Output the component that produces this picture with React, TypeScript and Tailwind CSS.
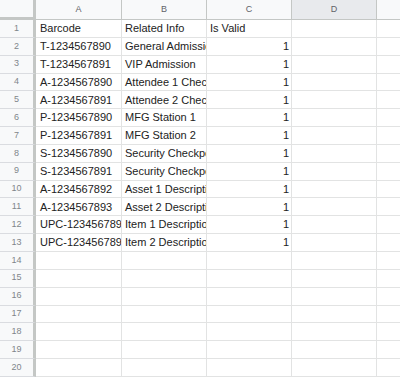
const columns = ["A", "B", "C", "D", "E"];

type Row = [string, string, string];

const data: Row[] = [
  ["Barcode", "Related Info", "Is Valid"],
  ["T-1234567890", "General Admission", "1"],
  ["T-1234567891", "VIP Admission", "1"],
  ["A-1234567890", "Attendee 1 Check-in", "1"],
  ["A-1234567891", "Attendee 2 Check-in", "1"],
  ["P-1234567890", "MFG Station 1", "1"],
  ["P-1234567891", "MFG Station 2", "1"],
  ["S-1234567890", "Security Checkpoint 1", "1"],
  ["S-1234567891", "Security Checkpoint 2", "1"],
  ["A-1234567892", "Asset 1 Description", "1"],
  ["A-1234567893", "Asset 2 Description", "1"],
  ["UPC-123456789012", "Item 1 Description", "1"],
  ["UPC-123456789013", "Item 2 Description", "1"],
];

const ROW_COUNT = 20;
const gridCols = "grid grid-cols-[36px_86px_85px_85px_85px_85px] w-[462px]";

export default function App() {
  return (
    <div className="w-[400px] h-[377px] overflow-hidden bg-white font-['Liberation_Sans',Arial,sans-serif] text-[#222]">
      {/* column header */}
      <div className={`${gridCols} h-[20px]`}>
        <div className="bg-[#f8f9fa] border-r-[3px] border-b-[3px] border-[#c4c7c5]" />
        {columns.map((c) => (
          <div
            key={c}
            className={`flex items-center justify-center border-r border-b border-[#c4c7c5] text-[9px] text-[#5f6368] ${
              c === "D" ? "bg-[#e8eaed]" : "bg-[#f8f9fa]"
            }`}
          >
            {c}
          </div>
        ))}
      </div>

      {/* rows */}
      {Array.from({ length: ROW_COUNT }, (_, i) => {
        const row = data[i];
        return (
          <div key={i} className={`${gridCols} h-[17.85px]`}>
            <div className="flex items-center justify-center bg-[#f8f9fa] border-r-[3px] border-b border-r-[#c4c7c5] border-b-[#dadce0] text-[9px] text-[#80868b]">
              {i + 1}
            </div>
            <div className="flex items-center overflow-hidden whitespace-nowrap border-r border-b border-[#e2e3e3] pl-[4px] text-[11px]">
              {row?.[0]}
            </div>
            <div className="flex items-center overflow-hidden whitespace-nowrap border-r border-b border-[#e2e3e3] pl-[3px] text-[11px]">
              {row?.[1]}
            </div>
            <div
              className={`flex items-center overflow-hidden whitespace-nowrap border-r border-b border-[#e2e3e3] text-[11px] ${
                i === 0 ? "pl-[3px]" : "justify-end pr-[2px]"
              }`}
            >
              {row?.[2]}
            </div>
            <div className="border-r border-b border-[#e2e3e3]" />
            <div className="border-r border-b border-[#e2e3e3]" />
          </div>
        );
      })}
    </div>
  );
}
